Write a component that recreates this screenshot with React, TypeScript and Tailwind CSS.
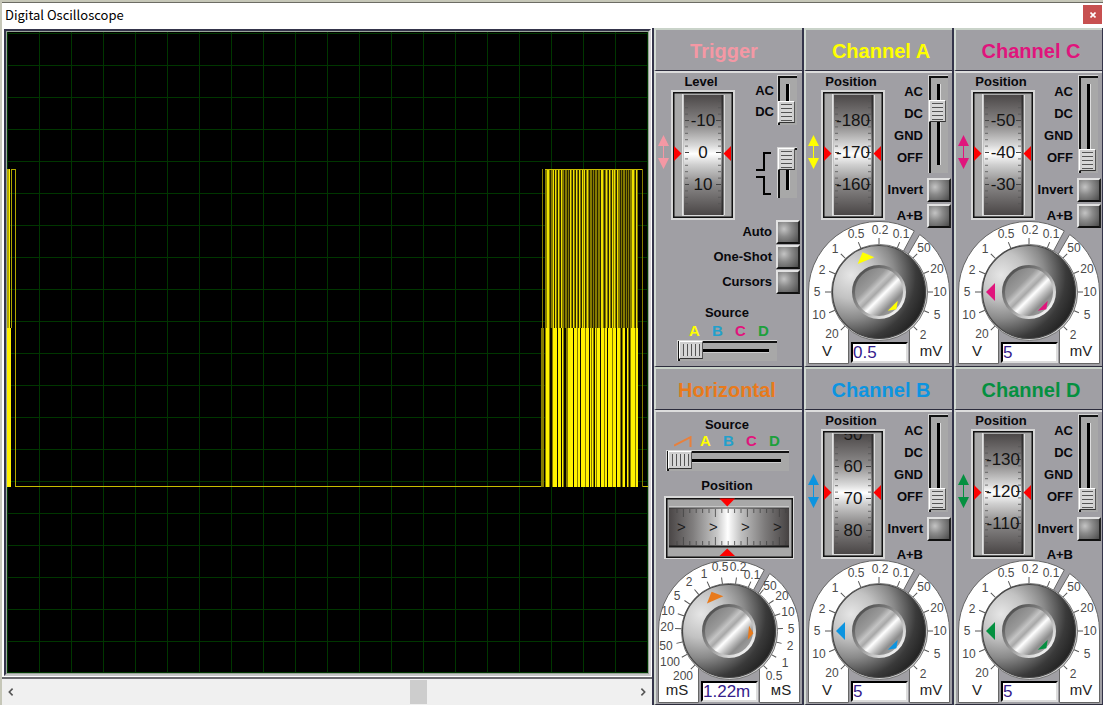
import React, { useId, useState } from "react";

const SCREEN = 641;
const GRID = Array.from({ length: 21 }, (_, i) => i * 32);

/* [x, width] spans of the burst, in screen units */
const UPPER_BRIGHT = [
  [540, 2], [546, 1], [548, 1], [551, 1], [554, 1], [563, 1], [566, 1], [569, 1], [572, 1], [575, 1], [577, 1], [580, 1],
  [594, 2], [599, 1], [602, 1], [605, 1], [607, 1], [610, 1], [625, 2], [629, 1],
];
const UPPER_DARK = [
  [543, 1], [547, 1], [550, 1], [553, 1], [557, 1], [560, 1], [562, 1], [565, 1], [568, 1], [571, 1], [574, 1], [578, 1],
  [582, 1], [585, 1], [587, 1], [590, 1], [593, 1], [597, 1], [601, 1], [604, 1], [609, 1], [613, 1], [615, 1], [618, 1],
  [620, 1], [622, 1], [628, 1],
];
const LOWER_BRIGHT = [
  [539, 3], [546, 4], [551, 3], [555, 1], [561, 5], [567, 3], [571, 2], [574, 4], [579, 3], [583, 1], [585, 1], [588, 1],
  [590, 3], [594, 3], [598, 2], [601, 4], [606, 3], [610, 3], [616, 2], [620, 1], [624, 4], [629, 2],
];
const LOWER_DARK = [
  [543, 2], [550, 1], [554, 1], [557, 2], [566, 1], [573, 1], [582, 1], [587, 1], [593, 1], [600, 1], [609, 1], [614, 1],
  [618, 2], [622, 1],
];

function Screen() {
  return (
    <svg
      className="h-0 w-full grow bg-black"
      viewBox={`0 0 ${SCREEN} ${SCREEN}`}
      preserveAspectRatio="none"
      shapeRendering="crispEdges"
      role="img"
      aria-label="Waveform"
    >
      {GRID.map((p) => (
        <g key={p} fill="#003600">
          <rect x={p} y={0} width={1} height={SCREEN} />
          <rect x={0} y={p + 1} width={SCREEN} height={1} />
        </g>
      ))}
      <rect x={0} y={640} width={SCREEN} height={1} fill="#003600" />
      <g fill="#b0a600">
        <rect x={0} y={137} width={2} height={318} />
        <rect x={4} y={137} width={1} height={159} />
        <rect x={4} y={137} width={5} height={1} />
        <rect x={8} y={137} width={1} height={318} />
      </g>
      <g fill="#fff000">
        <rect x={2} y={137} width={1} height={318} />
        <rect x={0} y={296} width={4} height={159} />
      </g>
      <g fill="#c8bc00">
        <rect x={8} y={454} width={527} height={1} />
        <rect x={538} y={137} width={98} height={1} />
        <rect x={636} y={454} width={5} height={1} />
      </g>
      <g fill="#857b00">
        <rect x={535} y={137} width={1} height={159} />
        <rect x={538} y={138} width={93} height={158} />
        <rect x={635} y={137} width={1} height={318} />
        <rect x={534} y={296} width={3} height={159} />
        <rect x={538} y={296} width={93} height={159} />
      </g>
      {UPPER_DARK.map(([x, w]) => <rect key={x} x={x} y={138} width={w} height={158} fill="#2a2600" />)}
      {UPPER_BRIGHT.map(([x, w]) => <rect key={x} x={x} y={138} width={w} height={158} fill="#f0e200" />)}
      {LOWER_DARK.map(([x, w]) => <rect key={x} x={x} y={296} width={w} height={159} fill="#0c0b00" />)}
      {LOWER_BRIGHT.map(([x, w]) => <rect key={x} x={x} y={296} width={w} height={159} fill="#fff200" />)}
    </svg>
  );
}

function ScrollBar() {
  const [pos, setPos] = useState(653);
  return (
    <div className="mt-px flex h-[28px] shrink-0 items-stretch border-t-2 border-[#6a6a6e] bg-[#f0f0f0]">
      <button type="button" aria-label="Scroll left" onClick={() => setPos(Math.max(0, pos - 10))} className="flex w-[18px] items-center justify-center">
        <svg width="6" height="8" viewBox="0 0 6 8" fill="none" stroke="#555" strokeWidth="1.6"><path d="M4.6 .6 1.3 4l3.3 3.4" /></svg>
      </button>
      <input
        type="range"
        aria-label="Time scroll"
        min={0}
        max={1000}
        value={pos}
        onChange={(e) => setPos(Number(e.target.value))}
        className="m-0 min-w-0 flex-1 appearance-none bg-transparent [&::-webkit-slider-thumb]:h-[24px] [&::-webkit-slider-thumb]:w-[17px] [&::-webkit-slider-thumb]:appearance-none [&::-webkit-slider-thumb]:bg-[#cdcdcd]"
      />
      <button type="button" aria-label="Scroll right" onClick={() => setPos(Math.min(1000, pos + 10))} className="flex w-[18px] items-center justify-center">
        <svg width="6" height="8" viewBox="0 0 6 8" fill="none" stroke="#555" strokeWidth="1.6"><path d="M1.4 .6 4.7 4 1.4 7.4" /></svg>
      </button>
    </div>
  );
}

function Panel({ title, color, pad, children }: { title: string; color: string; pad: string; children: React.ReactNode }) {
  return (
    <section className="flex flex-col border-l-2 border-[#34344a] bg-[#a09fa4]">
      <h2 className={`flex h-[43px] shrink-0 items-center justify-center border-t-2 border-b border-l-2 border-t-[#c9d3c9] border-b-[#2c2c3c] border-l-[#d3dad3] pt-[2px] text-[20px] leading-6 font-bold ${pad} ${color}`}>
        {title}
      </h2>
      <div className="flex flex-1 flex-col border-t-2 border-b border-l-2 border-t-[#dcdcdc] border-b-[#2c2c3c] border-l-[#d3dad3]">{children}</div>
    </section>
  );
}

function Wheel({ values, first }: { values: string[]; first: number }) {
  const id = useId();
  const ticks = Array.from({ length: 28 }, (_, i) => first - 32 + i * 6.4).filter((y) => y > 1 && y < 119);
  return (
    <div className="flex h-[130px] w-[64px] border-2 border-[#d6d6d6] bg-[#a8a8a8]">
      <svg width="60" height="126" viewBox="0 0 60 126" role="img" aria-label={`Wheel at ${values[values.length - 2]}`}>
        <defs>
          <linearGradient id={id} x1="0" y1="0" x2="0" y2="1">
            <stop offset="0" stopColor="#4c4848" />
            <stop offset=".25" stopColor="#8c8a8a" />
            <stop offset=".42" stopColor="#d8d8d8" />
            <stop offset=".49" stopColor="#fff" />
            <stop offset=".58" stopColor="#d0d0d0" />
            <stop offset=".76" stopColor="#868484" />
            <stop offset="1" stopColor="#4a4646" />
          </linearGradient>
          <clipPath id={`${id}c`}><rect x="11" y="3" width="39" height="120" /></clipPath>
        </defs>
        <rect x=".75" y=".75" width="58.5" height="124.5" fill="none" stroke="#111" strokeWidth="1.5" />
        <rect x="9" y="2" width="1.5" height="121" fill="#e4e4e4" />
        <rect x="9" y="122.500" width="42" height="1.5" fill="#d8d8d8" />
        <rect x="11" y="3" width="39" height="120" fill={`url(#${id})`} />
        <rect x="48.500" y="3" width="2" height="120" fill="#222" opacity=".75" />
        <rect x="51" y="3" width="1" height="120" fill="#ddd" />
        <g clipPath={`url(#${id}c)`}>
          {ticks.map((y) => (
            <path key={y} d={`M12 ${y + 3.5}h3M45 ${y + 3.5}h3`} stroke="#555" strokeWidth="1" opacity=".8" />
          ))}
          {values.map((v, i) => {
            const y = first + i * 32 + 3;
            return (
              <g key={v}>
                <path d={`M12 ${y + 0.5}h4M43 ${y + 0.5}h5`} stroke="#444" strokeWidth="1" />
                <text x="30" y={y + 6} textAnchor="middle" fontSize="17" fill="#141414">{v}</text>
              </g>
            );
          })}
        </g>
        <path d="M1 54v15l7.500-7.500zM58 54v15l-7.500-7.500z" fill="#f00" />
      </svg>
    </div>
  );
}

function PositionWheel({ label, color, values, first }: { label: string; color: string; values: string[]; first: number }) {
  return (
    <div className="flex gap-[2px] pl-[2px]">
      <svg className={`mt-[62px] ${color}`} width="11" height="34" viewBox="0 0 11 34" fill="currentColor" aria-hidden="true">
        <path d="M5.500 0 11 11H6v12h5L5.500 34 0 23h5V11H0z" />
      </svg>
      <div>
        <div className="h-[17px] pr-1 text-center text-[13px] leading-[18px] font-bold">{label}</div>
        <Wheel values={values} first={first} />
      </div>
    </div>
  );
}

const V_THUMB =
  "[&::-webkit-slider-thumb]:h-[22px] [&::-webkit-slider-thumb]:w-[17px] [&::-webkit-slider-thumb]:appearance-none [&::-webkit-slider-thumb]:border [&::-webkit-slider-thumb]:border-t-white [&::-webkit-slider-thumb]:border-l-white [&::-webkit-slider-thumb]:border-r-[#555] [&::-webkit-slider-thumb]:border-b-[#333] [&::-webkit-slider-thumb]:bg-[#cfcfcf] [&::-webkit-slider-thumb]:bg-[repeating-linear-gradient(to_bottom,#555_0_1px,#d8d8d8_1px_4px)] [&::-webkit-slider-thumb]:bg-[length:11px_17px] [&::-webkit-slider-thumb]:bg-[position:2px_2px] [&::-webkit-slider-thumb]:bg-no-repeat";
const H_THUMB =
  "[&::-webkit-slider-thumb]:h-[18px] [&::-webkit-slider-thumb]:w-[24px] [&::-webkit-slider-thumb]:appearance-none [&::-webkit-slider-thumb]:border [&::-webkit-slider-thumb]:border-t-white [&::-webkit-slider-thumb]:border-l-white [&::-webkit-slider-thumb]:border-r-[#555] [&::-webkit-slider-thumb]:border-b-[#333] [&::-webkit-slider-thumb]:bg-[#cfcfcf] [&::-webkit-slider-thumb]:bg-[repeating-linear-gradient(to_right,#555_0_1px,#d8d8d8_1px_4px)] [&::-webkit-slider-thumb]:bg-[length:17px_12px] [&::-webkit-slider-thumb]:bg-[position:3px_2px] [&::-webkit-slider-thumb]:bg-no-repeat";

function VSlider({ label, max, value, size }: { label: string; max: number; value: number; size: string }) {
  return (
    <div className={`flex w-[20px] shrink-0 border-t border-l border-[#d4d4d4] bg-[#a8a8a8] pb-[2px] shadow-[inset_2px_2px_0_#111] ${size}`}>
      <input
        type="range"
        aria-label={label}
        min={0}
        max={max}
        defaultValue={value}
        className={`m-0 h-full w-[17px] appearance-none bg-[linear-gradient(to_right,#000_0_3px,#ddd_3px_4px)] bg-[length:4px_calc(100%-14px)] bg-[position:8px_8px] bg-no-repeat [writing-mode:vertical-lr] ${V_THUMB}`}
      />
    </div>
  );
}

function HSlider({ label, max }: { label: string; max: number }) {
  return (
    <div className="flex h-[21px] w-full border-t border-l border-[#d4d4d4] bg-[#a8a8a8] pl-px shadow-[inset_2px_2px_0_#111]">
      <input
        type="range"
        aria-label={label}
        min={0}
        max={max}
        defaultValue={0}
        className={`m-0 h-[18px] w-full appearance-none bg-[linear-gradient(to_bottom,#000_0_3px,#ccc_3px_4px)] bg-[length:calc(100%-14px)_4px] bg-[position:6px_8px] bg-no-repeat ${H_THUMB}`}
      />
    </div>
  );
}

function PushButton({ label, hasButton = true }: { label: string; hasButton?: boolean }) {
  const id = useId();
  return (
    <div className="flex h-6 items-center justify-end gap-1 text-[13px] leading-4 font-bold">
      <label htmlFor={hasButton ? id : undefined}>{label}</label>
      {hasButton ? (
        <button
          id={id}
          type="button"
          className="h-6 w-6 border-2 border-t-[#e2e2e2] border-r-[#222] border-b-[#111] border-l-[#e2e2e2] bg-[radial-gradient(circle_at_30%_35%,#c4c4c4,#8a8a8a_40%,#4a4a4a_100%)]"
        />
      ) : (
        <span className="w-6" />
      )}
    </div>
  );
}

type Mark = [string, number, number];
const VOLT_MARKS: Mark[] = [
  ["20", 24, 113], ["10", 11, 94], ["5", 9, 71], ["2", 14, 49], ["1", 27, 28], ["0.5", 48, 13], ["0.2", 72, 9],
  ["0.1", 93, 13], ["50", 116, 27], ["20", 129, 48], ["10", 132, 71], ["5", 129, 94], ["2", 115, 114],
];
const TIME_MARKS: Mark[] = [
  ["200", 25, 116], ["100", 12, 102], ["50", 8, 86], ["20", 9, 67], ["10", 10, 51], ["5", 19, 36], ["2", 31, 22],
  ["1", 46, 14], ["0.5", 62, 7], ["0.2", 80, 7], ["0.1", 94, 15], ["50", 112, 26], ["20", 124, 36], ["10", 130, 52],
  ["5", 133, 69], ["2", 132, 86], ["1", 127, 103], ["0.5", 116, 116],
];

function Dial({ marks, angle, inner, color, left, right, value, name }: {
  marks: Mark[]; angle: number; inner: number; color: string; left: string; right: string; value: string; name: string;
}) {
  const id = useId();
  const step = 270 / (marks.length - 1);
  return (
    <div className="grid w-[142px]">
      <svg className="pointer-events-none col-start-1 row-start-1" width="142" height="143" viewBox="0 0 142 143" role="img" aria-label={`${name} knob`}>
        <defs>
          <radialGradient id={`${id}k`} cx=".2" cy=".32" r=".85">
            <stop offset="0" stopColor="#e6e6e6" />
            <stop offset=".3" stopColor="#c2c2c2" />
            <stop offset=".55" stopColor="#8a8a8a" />
            <stop offset=".82" stopColor="#3a3a3a" />
            <stop offset="1" stopColor="#222" />
          </radialGradient>
          <linearGradient id={`${id}r`} x1=".15" y1=".15" x2=".85" y2=".85">
            <stop offset="0" stopColor="#555" />
            <stop offset=".5" stopColor="#999" />
            <stop offset="1" stopColor="#eee" />
          </linearGradient>
          <linearGradient id={`${id}i`} x1=".1" y1=".1" x2=".9" y2=".9">
            <stop offset="0" stopColor="#7c7c7c" />
            <stop offset=".3" stopColor="#9a9a9a" />
            <stop offset=".4" stopColor="#c4c4c4" />
            <stop offset=".48" stopColor="#a8a8a8" />
            <stop offset=".58" stopColor="#fff" />
            <stop offset=".68" stopColor="#c8c8c8" />
            <stop offset=".8" stopColor="#8c8c8c" />
            <stop offset="1" stopColor="#aaa" />
          </linearGradient>
        </defs>
        <g fill="#fff" stroke="#666" strokeWidth="1">
          <path d="M.5 142.500V71A70.500 70.500 0 0 1 106.300 9.900L95 31 71 71 40.500 102v40.500z" />
          <path d="M141.500 142.500V71A70.500 70.500 0 0 0 111.700 13.500L101 32 71 71 101.500 102v40.500z" />
        </g>
        {marks.map((_, i) => (
          <path key={i} d="M71 24v-7" stroke="#555" strokeWidth="1" transform={`rotate(${-135 + i * step} 71 71)`} />
        ))}
        {marks.map(([t, x, y], i) => (
          <text key={i} x={x} y={y + 4} textAnchor="middle" fontSize="12" fill="#4a4a4a">{t}</text>
        ))}
        <circle cx="71.500" cy="71.500" r="48" fill="#d0d0d0" stroke="#777" strokeWidth="1" />
        <circle cx="71" cy="71" r="46.500" fill={`url(#${id}k)`} stroke="#444" strokeWidth="1.200" />
        <circle cx="71" cy="71" r="25.500" fill={`url(#${id}i)`} stroke={`url(#${id}r)`} strokeWidth="3" />
        <g className={color} fill="currentColor">
          <path d="M71 28l9 9H62z" transform={`rotate(${angle} 71 71)`} />
          <path d="M71 46.500l7 5H64z" transform={`rotate(${inner} 71 71)`} />
        </g>
      </svg>
      <div className="col-start-1 row-start-1 flex items-end self-end pb-px text-[15px] leading-4 text-[#222]">
        <span className="w-[43px] pr-[5px] pb-1 text-center">{left}</span>
        <input
          aria-label={`${name} scale`}
          defaultValue={value}
          className="h-[21px] w-[57px] border-2 border-t-black border-r-[#ddd] border-b-[#ddd] border-l-black bg-white p-0 text-[17px] leading-4 text-[#35208c] outline-none"
        />
        <span className="flex-1 pl-1 pb-1 text-center">{right}</span>
      </div>
    </div>
  );
}

function Channel({ letter, color, values, first, coupling, angle, value, sum }: {
  letter: string; color: string; values: string[]; first: number; coupling: number; angle: number; value: string; sum: boolean;
}) {
  return (
    <Panel title={`Channel ${letter}`} color={color} pad="pl-1">
      <div className="flex justify-between pr-px">
        <PositionWheel label="Position" color={color} values={values} first={first} />
        <div className="flex w-[65px] flex-col pt-[2px]">
          <div className="mb-[5px] flex justify-end gap-[5px] pr-[3px]">
            <ul className="pt-[6px] text-right text-[13px] leading-[22px] font-bold">
              {["AC", "DC", "GND", "OFF"].map((t) => <li key={t}>{t}</li>)}
            </ul>
            <VSlider label={`Channel ${letter} coupling`} max={3} value={coupling} size="h-[98px]" />
          </div>
          <PushButton label="Invert" />
          <div className="mt-[2px]"><PushButton label="A+B" hasButton={sum} /></div>
        </div>
      </div>
      <div className="-mt-[7px] pl-[2px]">
        <Dial marks={VOLT_MARKS} angle={angle} inner={135} color={color} left="V" right="mV" value={value} name={`Channel ${letter}`} />
      </div>
    </Panel>
  );
}

function SourceLetters() {
  return (
    <>
      <span className="w-[23px] text-[#ffff00]">A</span>
      <span className="w-[23px] text-[#22a0cc]">B</span>
      <span className="w-[23px] text-[#e0147c]">C</span>
      <span className="w-[23px] text-[#1ca03c]">D</span>
    </>
  );
}

function TriggerPanel() {
  return (
    <Panel title="Trigger" color="text-[#f498a4]" pad="pr-[10px]">
      <div className="flex justify-between pr-[5px]">
        <PositionWheel label="Level" color="text-[#f498a4]" values={["-10", "0", "10"]} first={25} />
        <div className="flex flex-col gap-[22px] pt-[2px]">
          <div className="flex justify-end gap-[3px]">
            <ul className="pt-[5px] text-right text-[13px] leading-[21px] font-bold">
              <li>AC</li>
              <li>DC</li>
            </ul>
            <VSlider label="Trigger coupling" max={1} value={1} size="h-[50px]" />
          </div>
          <div className="flex justify-end gap-[5px]">
            <svg className="mt-[5px]" width="16" height="44" viewBox="0 0 16 44" fill="none" stroke="#000" strokeWidth="2" aria-hidden="true">
              <path d="M0 18h8V1h7M0 25h8v17h7" />
            </svg>
            <VSlider label="Trigger edge" max={1} value={0} size="h-[51px]" />
          </div>
        </div>
      </div>
      <div className="flex flex-col gap-px pr-[2px]">
        <PushButton label="Auto" />
        <PushButton label="One-Shot" />
        <PushButton label="Cursors" />
      </div>
      <div className="mt-[11px] pr-1 text-center text-[13px] leading-4 font-bold">Source</div>
      <div className="mt-[2px] ml-[21px] w-[100px]">
        <div className="mb-px flex pl-[6px] text-center text-[15px] leading-4 font-bold"><SourceLetters /></div>
        <HSlider label="Trigger source" max={3} />
      </div>
    </Panel>
  );
}

function HorizontalWheel() {
  const id = useId();
  const ticks = Array.from({ length: 18 }, (_, i) => 8 + i * 6.4);
  return (
    <svg className="mt-[2px] ml-[8px]" width="130" height="63" viewBox="0 0 130 63" role="img" aria-label="Horizontal position wheel">
      <defs>
        <linearGradient id={id}>
          <stop offset="0" stopColor="#4a4646" />
          <stop offset=".2" stopColor="#807e7e" />
          <stop offset=".4" stopColor="#c8c8c8" />
          <stop offset=".49" stopColor="#fff" />
          <stop offset=".6" stopColor="#c0c0c0" />
          <stop offset=".8" stopColor="#7c7a7a" />
          <stop offset="1" stopColor="#464242" />
        </linearGradient>
      </defs>
      <rect width="130" height="63" fill="#dadada" />
      <rect x="2" y="2" width="127" height="60" fill="#111" />
      <rect x="3.500" y="3.500" width="124" height="57" fill="#a8a8a8" />
      <rect x="5" y="10.500" width="120" height="1.500" fill="#e6e6e6" />
      <rect x="5" y="12" width="120" height="39" fill={`url(#${id})`} />
      <rect x="5" y="49.500" width="120" height="2" fill="#1a1a1a" />
      <rect x="5" y="11.500" width="120" height="1" fill="#333" />
      {ticks.map((x, i) => {
        const h = i % 5 === 1 ? 8 : 4;
        return <path key={x} d={`M${x + 5} 13v${h}M${x + 5} 49v-${h}`} stroke="#444" strokeWidth="1" opacity=".8" />;
      })}
      {[17.5, 49.5, 81.5, 113.5].map((x) => (
        <text key={x} x={x} y="36" textAnchor="middle" fontSize="15" fill="#1a1a1a">&gt;</text>
      ))}
      <path d="M55.500 2.500h15.500l-7.750 8zM55.500 60h15.500l-7.750-7.500z" fill="#f00" />
    </svg>
  );
}

function HorizontalPanel() {
  return (
    <Panel title="Horizontal" color="text-[#e87a1c]" pad="pr-1">
      <div className="mt-[5px] pr-1 text-center text-[13px] leading-4 font-bold">Source</div>
      <div className="ml-[10px] w-[123px]">
        <div className="mb-px flex pl-[5px] text-center text-[15px] leading-4 font-bold">
          <span className="flex w-[23px] items-center justify-center">
            <svg width="18" height="11" viewBox="0 0 18 11" fill="none" stroke="#e8803c" strokeWidth="2" aria-label="Sweep" role="img">
              <path d="M0 9.500 16.500 1.200V11" />
            </svg>
          </span>
          <SourceLetters />
        </div>
        <HSlider label="Horizontal source" max={4} />
      </div>
      <div className="mt-[7px] pr-1 text-center text-[13px] leading-4 font-bold">Position</div>
      <HorizontalWheel />
      <div className="mt-px pl-[2px]">
        <Dial marks={TIME_MARKS} angle={-24} inner={95} color="text-[#e87a1c]" left="mS" right="мS" value="1.22m" name="Time base" />
      </div>
    </Panel>
  );
}

export default function App() {
  return (
    <div className="flex min-h-screen flex-col bg-[#c6c7b8] pt-[2px] pl-[2px] font-['Liberation_Sans',Arial,sans-serif] text-[#08080c]">
      <header className="flex h-[26px] shrink-0 items-center justify-between border-t border-[#6c6c64] bg-white pr-px pb-[2px] pl-[3px]">
        <h1 className="font-['Noto_Sans_CJK_SC',sans-serif] text-[13px] leading-4 text-black">Digital Oscilloscope</h1>
        <button type="button" aria-label="Close" className="flex h-[19px] w-[19px] items-center justify-center bg-[#c75050]">
          <svg width="6" height="6" viewBox="0 0 6 6" stroke="#fff" strokeWidth="1.600"><path d="M.5 .5l5 5M5.500 .5l-5 5" /></svg>
        </button>
      </header>
      <div className="flex flex-1">
        <main className="flex min-w-0 flex-1 flex-col bg-white pt-px">
          <div className="mr-px ml-[2px] flex min-h-0 flex-1 border-2 border-t-[#34344a] border-r-[#d8d4d8] border-b-[#c8c8c8] border-l-[#34344a]">
            <div className="flex min-w-0 flex-1 flex-col border border-[#9aa59a]">
              <Screen />
            </div>
          </div>
          <ScrollBar />
        </main>
        <div className="grid shrink-0 grid-cols-[150px_150px_150px] grid-rows-[339px_1fr] border-r border-[#34344a]">
          <TriggerPanel />
          <Channel letter="A" color="text-[#ffff00]" values={["-180", "-170", "-160"]} first={25} coupling={1} angle={-22.5} value="0.5" sum />
          <Channel letter="C" color="text-[#e0147c]" values={["-50", "-40", "-30"]} first={25} coupling={3} angle={-90} value="5" sum />
          <HorizontalPanel />
          <Channel letter="B" color="text-[#0c94e0]" values={["50", "60", "70", "80"]} first={0} coupling={3} angle={-90} value="5" sum={false} />
          <Channel letter="D" color="text-[#049040]" values={["-130", "-120", "-110"]} first={25} coupling={3} angle={-90} value="5" sum={false} />
        </div>
      </div>
    </div>
  );
}
